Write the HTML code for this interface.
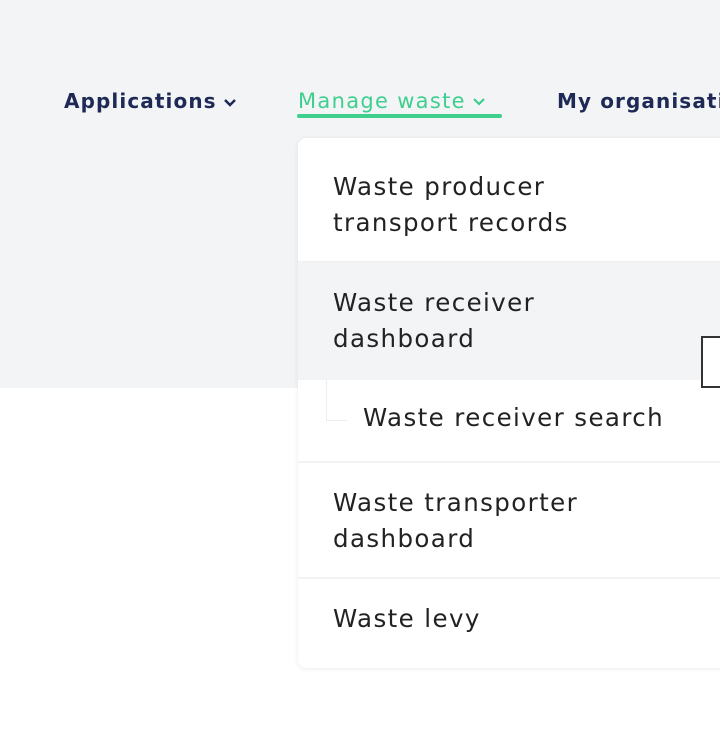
<!DOCTYPE html>
<html><head><style>
body{margin:0;width:720px;height:733px;overflow:hidden;background:#fff;position:relative;font-family:"DejaVu Sans","Liberation Sans",sans-serif;}
.top{position:absolute;left:0;top:0;width:720px;height:388px;background:#f3f4f6;}
.nav{position:absolute;top:89px;font-weight:bold;font-size:20px;color:#1e2a55;white-space:nowrap;letter-spacing:1.1px}
.nav svg{vertical-align:middle;margin-left:6px}
.ul{position:absolute;left:297px;top:114px;width:205px;height:4px;background:#3ecf8e;border-radius:2px}
.dd{position:absolute;left:298px;top:138px;width:440px;height:530px;background:#fff;border-radius:8px;box-shadow:0 1px 6px rgba(0,0,0,0.08);overflow:hidden}
.it{position:absolute;left:0;width:440px;font-size:24.5px;letter-spacing:1.4px;color:#222;line-height:36px;}
.it span{position:absolute;left:35px;white-space:nowrap}
.box{position:absolute;left:701px;top:336px;width:30px;height:52px;border:2px solid #333;background:#fff;box-sizing:border-box}
</style></head><body>
<div class="top"></div>
<div class="nav" style="left:64px">Applications<svg width="14" height="10" viewBox="0 0 14 10"><path d="M2 2l5 5 5-5" fill="none" stroke="#1e2a55" stroke-width="2.5"/></svg></div>
<div class="nav" style="left:298px;color:#3ecf8e;font-weight:normal;font-size:21px;letter-spacing:1.3px">Manage waste<svg width="14" height="10" viewBox="0 0 14 10"><path d="M2 2l5 5 5-5" fill="none" stroke="#3ecf8e" stroke-width="2.2"/></svg></div>
<div class="ul"></div>
<div class="nav" style="left:557px">My organisation</div>
<div class="dd">
 <div class="it" style="top:0;height:123px;border-bottom:1px solid #eef0f2"><span style="top:31px">Waste producer<br>transport records</span></div>
 <div class="it" style="top:124px;height:118px;background:#f3f4f6"><span style="top:23px">Waste receiver<br>dashboard</span></div>
 <div style="position:absolute;left:28px;top:242px;width:20px;height:40px;border-left:1px solid #eceef0;border-bottom:1px solid #eceef0"></div>
 <div class="it" style="top:242px;height:81px;border-bottom:2px solid #f1f2f4"><span style="left:65px;top:20px">Waste receiver search</span></div>
 <div class="it" style="top:325px;height:114px;border-bottom:2px solid #f1f2f4"><span style="top:22px">Waste transporter<br>dashboard</span></div>
 <div class="it" style="top:441px;height:89px"><span style="top:22px">Waste levy</span></div>
</div>
<div class="box"></div>
</body></html>
